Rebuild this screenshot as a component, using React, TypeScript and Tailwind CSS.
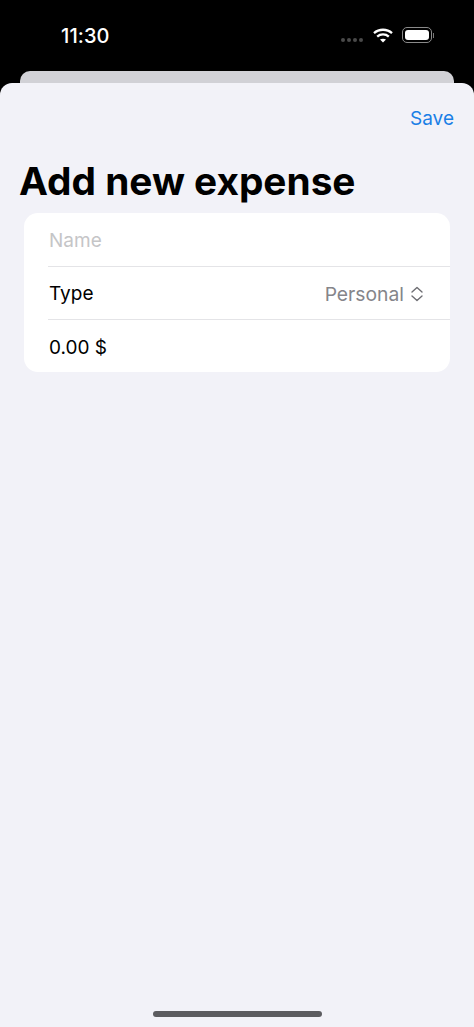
const font = "font-['Inter','Liberation_Sans',sans-serif]";

function Wifi() {
  return (
    <svg width="20" height="15" viewBox="0 0 20 15" fill="none" stroke="white" strokeWidth="2.3">
      <path d="M1 5.2C6 .6 14 .6 19 5.2" />
      <path d="M4.2 8.6C7.4 5.7 12.6 5.7 15.8 8.6" />
      <path d="M10 14.6 7 11.6C8.7 10.3 11.3 10.3 13 11.6Z" fill="white" stroke="none" />
    </svg>
  );
}

function Battery() {
  return (
    <div className="flex items-center gap-[1px]">
      <div className="w-[30px] h-[16px] rounded-[5px] border border-[#8a8a8a] p-[2px]">
        <div className="w-full h-full rounded-[3px] bg-white" />
      </div>
      <div className="w-[1px] h-[5px] bg-[#777777]" />
    </div>
  );
}

function Chevrons() {
  return (
    <svg width="14" height="16" viewBox="0 0 14 16" fill="none" stroke="#6e6e73" strokeWidth="1.4" strokeLinecap="round" strokeLinejoin="round">
      <path d="M2 6 7 1.5 12 6" />
      <path d="M2 10 7 14.5 12 10" />
    </svg>
  );
}

export default function App() {
  return (
    <div className={`${font} relative w-[474px] h-[1027px] bg-black overflow-hidden flex flex-col`}>
      <div className="h-[71px] shrink-0 flex items-start justify-between pt-[23px] pl-[61px] pr-[40px]">
        <span className="text-white text-[20px] leading-[26px] font-medium tracking-[0.1px]">11:30</span>
        <div className="flex items-center mt-[4px]">
          <div className="flex gap-[2px] mr-[10px] mt-[10px]">
            <span className="w-[4px] h-[4px] rounded-full bg-[#4a4a4a]" />
            <span className="w-[4px] h-[4px] rounded-full bg-[#4a4a4a]" />
            <span className="w-[4px] h-[4px] rounded-full bg-[#4a4a4a]" />
            <span className="w-[4px] h-[4px] rounded-full bg-[#4a4a4a]" />
          </div>
          <div className="mr-[9px]">
            <Wifi />
          </div>
          <Battery />
        </div>
      </div>

      <div className="mx-[20px] h-[12px] shrink-0 bg-[#d1d1d6] rounded-t-[10px]" />

      <div className="flex-1 bg-[#f2f2f8] rounded-t-[12px] flex flex-col">
        <div className="flex justify-end pr-[20px] pt-[23px]">
          <span className="text-[#1a7fe6] text-[19px] leading-[26px]">Save</span>
        </div>
        <h1 className="pl-[19px] mt-[25px] text-[38.8px] leading-[48px] font-bold text-black">Add new expense</h1>

        <div className="mx-[24px] mt-[8px] bg-white rounded-[14px] pl-[24px] overflow-hidden">
          <div className="h-[54px] pt-[3px] pl-[1px] flex items-center border-b border-[#e4e4e7] text-[19px] text-[#c5c5c7]">Name</div>
          <div className="h-[53px] pt-[2px] pl-[1px] flex items-center justify-between pr-[26px] border-b border-[#e4e4e7] text-[19px] text-black">
            <span>Type</span>
            <span className="flex items-center gap-[6px] text-[19.3px] text-[#85858a]">
              Personal
              <Chevrons />
            </span>
          </div>
          <div className="h-[52px] pt-[5px] pl-[1px] flex items-center text-[19px] text-black">0.00 $</div>
        </div>
      </div>

      <div className="absolute left-[153px] bottom-[10px] w-[169px] h-[6px] rounded-full bg-[#5c5c60]" />
    </div>
  );
}
